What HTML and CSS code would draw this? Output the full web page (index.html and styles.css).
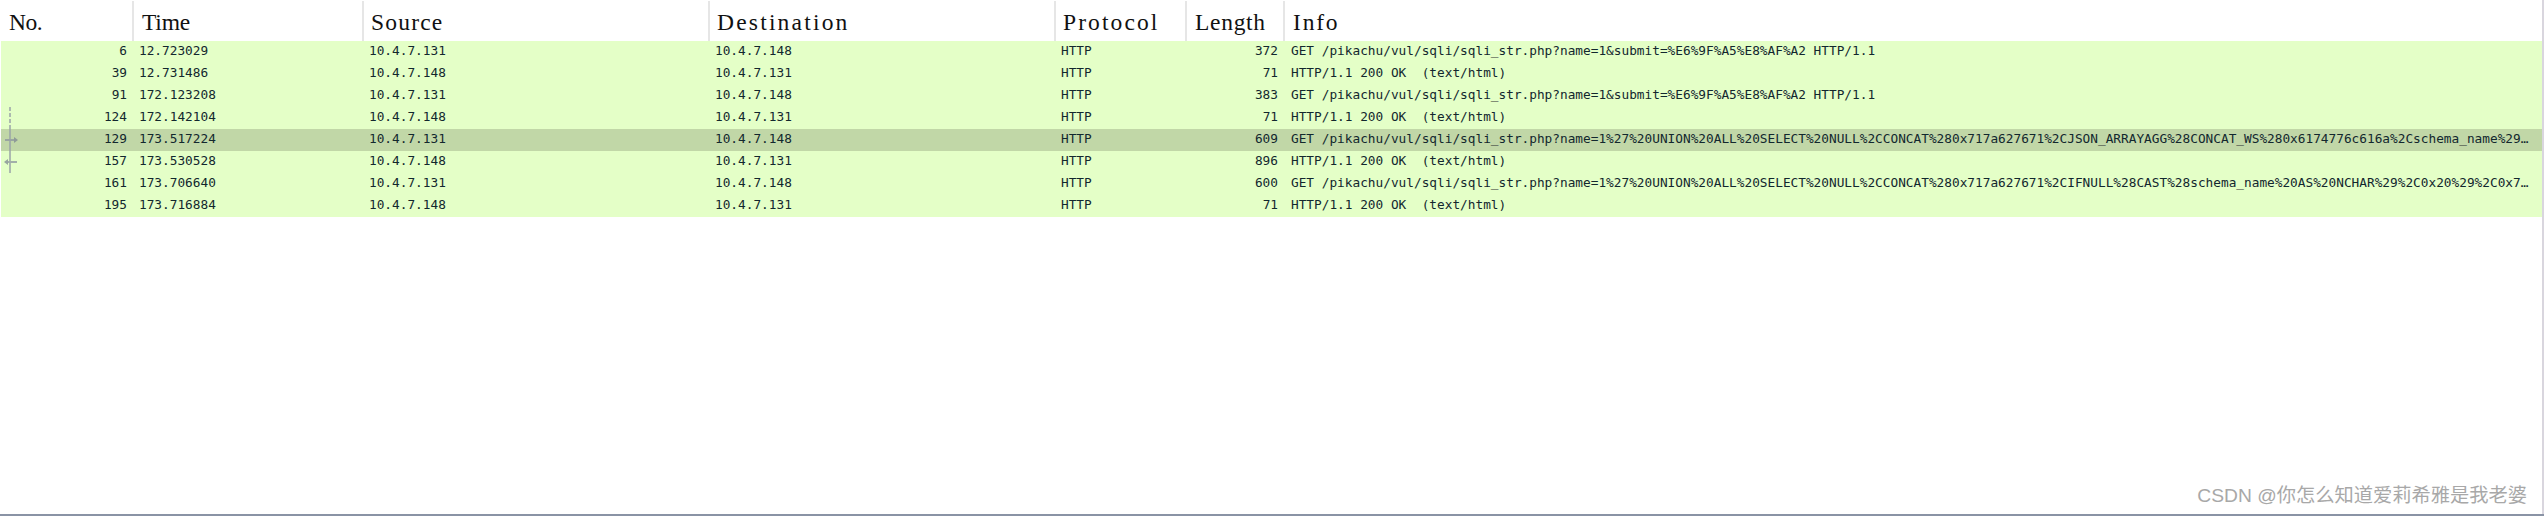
FILE: index.html
```html
<!DOCTYPE html>
<html lang="zh">

<head>
    <meta charset="utf-8">
    <title>Wireshark packets</title>
    <link rel="stylesheet" href="styles.css">
</head>

<body>
    <div class="packets">
        <div class="head">
            <div class="h h-no">No.</div>
            <div class="h h-time">Time</div>
            <div class="h h-source">Source</div>
            <div class="h h-dest">Destination</div>
            <div class="h h-proto">Protocol</div>
            <div class="h h-len">Length</div>
            <div class="h h-info">Info</div>
        </div>

        <div class="row">
            <div class="c num">6</div><div class="c">12.723029</div><div class="c">10.4.7.131</div><div class="c">10.4.7.148</div><div class="c">HTTP</div><div class="c num">372</div>
            <div class="c info">GET /pikachu/vul/sqli/sqli_str.php?name=1&amp;submit=%E6%9F%A5%E8%AF%A2 HTTP/1.1</div>
        </div>
        <div class="row">
            <div class="c num">39</div><div class="c">12.731486</div><div class="c">10.4.7.148</div><div class="c">10.4.7.131</div><div class="c">HTTP</div><div class="c num">71</div>
            <div class="c info">HTTP/1.1 200 OK  (text/html)</div>
        </div>
        <div class="row">
            <div class="c num">91</div><div class="c">172.123208</div><div class="c">10.4.7.131</div><div class="c">10.4.7.148</div><div class="c">HTTP</div><div class="c num">383</div>
            <div class="c info">GET /pikachu/vul/sqli/sqli_str.php?name=1&amp;submit=%E6%9F%A5%E8%AF%A2 HTTP/1.1</div>
        </div>
        <div class="row">
            <div class="c num">124</div><div class="c">172.142104</div><div class="c">10.4.7.148</div><div class="c">10.4.7.131</div><div class="c">HTTP</div><div class="c num">71</div>
            <div class="c info">HTTP/1.1 200 OK  (text/html)</div>
        </div>
        <div class="row selected">
            <div class="c num">129</div><div class="c">173.517224</div><div class="c">10.4.7.131</div><div class="c">10.4.7.148</div><div class="c">HTTP</div><div class="c num">609</div>
            <div class="c info">GET /pikachu/vul/sqli/sqli_str.php?name=1%27%20UNION%20ALL%20SELECT%20NULL%2CCONCAT%280x717a627671%2CJSON_ARRAYAGG%28CONCAT_WS%280x6174776c616a%2Cschema_name%29…</div>
        </div>
        <div class="row">
            <div class="c num">157</div><div class="c">173.530528</div><div class="c">10.4.7.148</div><div class="c">10.4.7.131</div><div class="c">HTTP</div><div class="c num">896</div>
            <div class="c info">HTTP/1.1 200 OK  (text/html)</div>
        </div>
        <div class="row">
            <div class="c num">161</div><div class="c">173.706640</div><div class="c">10.4.7.131</div><div class="c">10.4.7.148</div><div class="c">HTTP</div><div class="c num">600</div>
            <div class="c info">GET /pikachu/vul/sqli/sqli_str.php?name=1%27%20UNION%20ALL%20SELECT%20NULL%2CCONCAT%280x717a627671%2CIFNULL%28CAST%28schema_name%20AS%20NCHAR%29%2C0x20%29%2C0x7…</div>
        </div>
        <div class="row">
            <div class="c num">195</div><div class="c">173.716884</div><div class="c">10.4.7.148</div><div class="c">10.4.7.131</div><div class="c">HTTP</div><div class="c num">71</div>
            <div class="c info">HTTP/1.1 200 OK  (text/html)</div>
        </div>
    </div>

    <!-- related packet marks in the No. column -->
    <svg class="marks" width="20" height="70" viewBox="0 0 20 70">
        <path d="M10 2V20" stroke="#9aa3a8" stroke-width="2" stroke-dasharray="4 2" fill="none" />
        <path d="M10 20V68" stroke="#9aa3a8" stroke-width="2" fill="none" />
        <path d="M5 35H15" stroke="#8c95a0" stroke-width="2" fill="none" />
        <path d="M14 32L18 35L14 38Z" fill="#7f8794" />
        <path d="M7 57H17" stroke="#8c95a0" stroke-width="2" fill="none" />
        <path d="M8 54L4 57L8 60Z" fill="#7f8794" />
    </svg>

    <div class="mark">CSDN @你怎么知道爱莉希雅是我老婆</div>
</body>

</html>
```

FILE: styles.css
```css
* {
    margin: 0;
    box-sizing: border-box;
}

html, body {
    height: 100%;
}

body {
    background: #fff;
    position: relative;
    overflow: hidden;
    padding: 0 2px 0 1px;
    border-bottom: 2px solid #8a93a5;
}

body::after {
    content: "";
    position: absolute;
    top: 0;
    bottom: 0;
    right: 0;
    width: 2px;
    background: #d9d6de;
}

.head,
.row {
    display: grid;
    grid-template-columns: 133px 230px 346px 346px 131px 98px 1fr;
}

.head {
    height: 41px;
    padding-top: 1px;
}

.h {
    font-family: "Liberation Serif", serif;
    font-size: 23.5px;
    line-height: 43px;
    height: 40px;
    color: #111;
    padding-left: 7px;
    border-right: 2px solid #e6e6e6;
    white-space: nowrap;
}

.h-no { letter-spacing: -0.5px; padding-left: 8px; }
.h-time { letter-spacing: -0.2px; padding-left: 8px; }
.h-source { letter-spacing: 1.2px; }
.h-dest { letter-spacing: 2.2px; }
.h-proto { letter-spacing: 2.1px; }
.h-len { letter-spacing: 0.7px; padding-left: 8px; }
.h-info { letter-spacing: 1.8px; padding-left: 8px; border-right: 0; }

.row {
    height: 22px;
    background: #e4ffc7;
}

.selected {
    background: #c1d7a7;
}

.c {
    font-family: "DejaVu Sans Mono", monospace;
    font-size: 12.77px;
    line-height: 19px;
    height: 22px;
    color: #12272e;
    padding: 0 5px;
    white-space: pre;
    overflow: hidden;
}

.num {
    text-align: right;
    padding-right: 7px;
}

.info {
    padding-left: 6px;
}

.marks {
    position: absolute;
    left: 0;
    top: 105px;
    opacity: 0.75;
}

.mark {
    position: absolute;
    right: 17px;
    top: 483px;
    font-family: "Liberation Sans", "Noto Sans CJK SC", sans-serif;
    font-size: 19.25px;
    line-height: 26px;
    color: #a8a8a8;
    white-space: nowrap;
}
```
